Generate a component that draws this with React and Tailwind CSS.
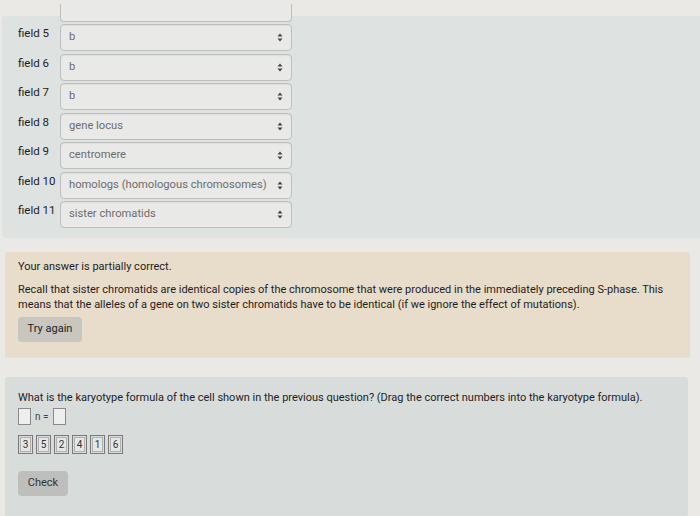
import React from 'react';

const fields = [
  { n: 5, v: 'b' },
  { n: 6, v: 'b' },
  { n: 7, v: 'b' },
  { n: 8, v: 'gene locus' },
  { n: 9, v: 'centromere' },
  { n: 10, v: 'homologs (homologous chromosomes)' },
  { n: 11, v: 'sister chromatids' },
];

function Arrows() {
  return (
    <svg width="6" height="9" viewBox="0 0 6 9" className="shrink-0">
      <path d="M3 0.5 L5.5 3.5 L0.5 3.5 Z" fill="#444" />
      <path d="M3 8.5 L5.5 5.5 L0.5 5.5 Z" fill="#444" />
    </svg>
  );
}

function Select({ value }) {
  return (
    <div className="w-[232px] h-[27px] rounded-[4px] border border-[#bdbfbe] bg-[#e9e9e7] flex items-center justify-between pl-[8px] pr-[8px] shadow-[inset_0_1px_1px_rgba(0,0,0,0.05)]">
      <span className="text-[11.2px] text-[#6d6d6d] truncate">{value}</span>
      <Arrows />
    </div>
  );
}

export default function App() {
  return (
    <div className="w-[700px] h-[516px] overflow-hidden bg-[#ebe9e5] font-['Roboto',sans-serif] text-[#222]">
      <div className="h-[16px]" />
      {/* selects panel */}
      <div className="ml-[2px] h-[222px] bg-[#dee2e1] rounded-l-[4px] relative">
        <div className="absolute left-[58px] top-[-12px] w-[232px] h-[18px] rounded-b-[4px] border border-t-0 border-[#bdbfbe] bg-[#e9e9e7]" />
        <div className="pt-[8px] pl-[16px] flex flex-col gap-[2.5px]">
          {fields.map((f) => (
            <div key={f.n} className="flex items-start">
              <div className="w-[42px] shrink-0 text-[11.5px] text-[#1e1e1e] pt-[1px] whitespace-nowrap">field {f.n}</div>
              <Select value={f.v} />
            </div>
          ))}
        </div>
      </div>

      <div className="h-[14px]" />
      {/* feedback */}
      <div className="ml-[5px] w-[685px] h-[106px] bg-[#e8dcca] rounded-[3px] px-[13px] pt-[8px]">
        <p className="text-[11px] leading-[14px] text-[#1e1e1e]">Your answer is partially correct.</p>
        <p className="mt-[8px] text-[11px] leading-[15px] text-[#1e1e1e]">
          Recall that sister chromatids are identical copies of the chromosome that were produced in the immediately preceding S-phase. This means that the alleles of a gene on two sister chromatids have to be identical (if we ignore the effect of mutations).
        </p>
        <div className="mt-[5px] w-[64px] h-[25px] rounded-[4px] bg-[#c9c6c0] flex items-center justify-center text-[11px] text-[#222]">Try again</div>
      </div>

      <div className="h-[19px]" />
      {/* question */}
      <div className="ml-[5px] w-[683px] h-[140px] bg-[#d8dcdb] rounded-[3px] px-[13px] pt-[14px]">
        <p className="text-[11px] leading-[14px] text-[#1e1e1e]">
          What is the karyotype formula of the cell shown in the previous question? (Drag the correct numbers into the karyotype formula).
        </p>
        <div className="mt-[3px] flex items-center gap-[4px]">
          <div className="w-[13px] h-[17px] border border-[#8a8a8a] bg-[#eeeeec]" />
          <span className="text-[10px] text-[#444]">n =</span>
          <div className="w-[13px] h-[17px] border border-[#8a8a8a] bg-[#eeeeec]" />
        </div>
        <div className="mt-[10px] flex gap-[3px]">
          {[3, 5, 2, 4, 1, 6].map((d) => (
            <div key={d} className="w-[15px] h-[19px] border border-[#7a7a7a] p-[1px]">
              <div className="w-full h-full border border-[#b0b0b0] bg-[#e6e6e4] flex items-center justify-center text-[10px] text-[#333]">{d}</div>
            </div>
          ))}
        </div>
        <div className="mt-[17px] w-[50px] h-[25px] rounded-[4px] bg-[#bebebd] flex items-center justify-center text-[11px] text-[#333]">Check</div>
      </div>
    </div>
  );
}
